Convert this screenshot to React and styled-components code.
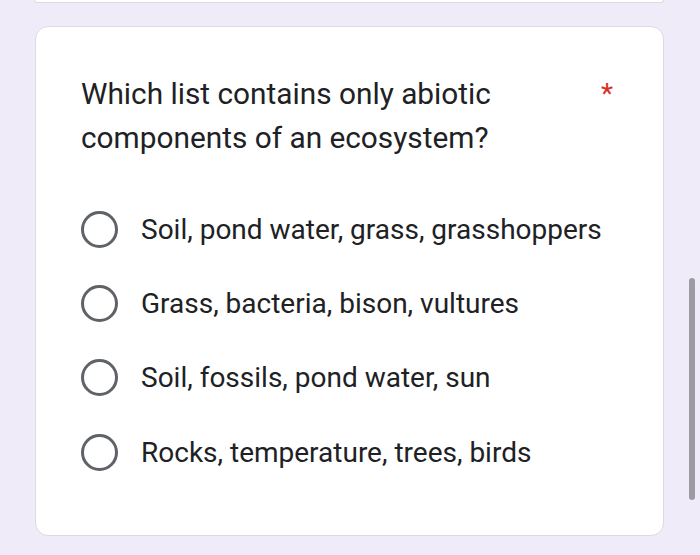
import React from 'react'
import styled, { createGlobalStyle } from 'styled-components'

const GlobalStyle = createGlobalStyle`
  html, body {
    margin: 0;
    padding: 0;
    background: #f0ebf8;
  }
  body {
    font-family: Roboto, 'Liberation Sans', Arial, sans-serif;
    overflow: hidden;
  }
`

const options = [
  'Soil, pond water, grass, grasshoppers',
  'Grass, bacteria, bison, vultures',
  'Soil, fossils, pond water, sun',
  'Rocks, temperature, trees, birds',
]

function App() {
  return (
    <>
      <GlobalStyle />
      <Page>
        <PrevCard />
        <Card>
          <Header>
            <Question>Which list contains only abiotic components of an ecosystem?</Question>
            <Required>*</Required>
          </Header>
          <Options>
            {options.map((label) => (
              <Option key={label}>
                <Radio />
                <Label>{label}</Label>
              </Option>
            ))}
          </Options>
        </Card>
      </Page>
      <Scrollbar />
    </>
  )
}

const Page = styled.div`
  width: 700px;
  height: 555px;
  box-sizing: border-box;
  padding: 0 36px 0 35px;
  display: flex;
  flex-direction: column;
  gap: 23px;
`

const PrevCard = styled.div`
  height: 2px;
  margin: 0 0 0 -1px;
  background: #fff;
  border: 1px solid #dadce0;
  border-top: none;
  border-radius: 0 0 12px 12px;
`

const Card = styled.div`
  background: #fff;
  border: 1px solid #dadce0;
  border-radius: 13px;
  box-sizing: border-box;
  height: 510px;
  padding: 45px 50px 0 45px;
  display: flex;
  flex-direction: column;
  gap: 32px;
`

const Header = styled.div`
  display: flex;
  justify-content: space-between;
  align-items: flex-start;
`

const Question = styled.div`
  font-size: 29.8px;
  line-height: 44px;
  color: #202124;
  max-width: 480px;
`

const Required = styled.span`
  color: #d93025;
  font-size: 28px;
  line-height: 44px;
`

const Options = styled.div`
  display: flex;
  flex-direction: column;
`

const Option = styled.div`
  display: flex;
  align-items: center;
  height: 74.4px;
  gap: 23px;
`

const Radio = styled.span`
  width: 37px;
  height: 37px;
  box-sizing: border-box;
  border: 3.5px solid #5f6368;
  border-radius: 50%;
  flex-shrink: 0;
`

const Label = styled.span`
  font-size: 28px;
  color: #202124;
`

const Scrollbar = styled.div`
  position: fixed;
  left: 689px;
  top: 278px;
  width: 6px;
  height: 222px;
  border-radius: 3px;
  background: #9d9aa3;
`

export default App
